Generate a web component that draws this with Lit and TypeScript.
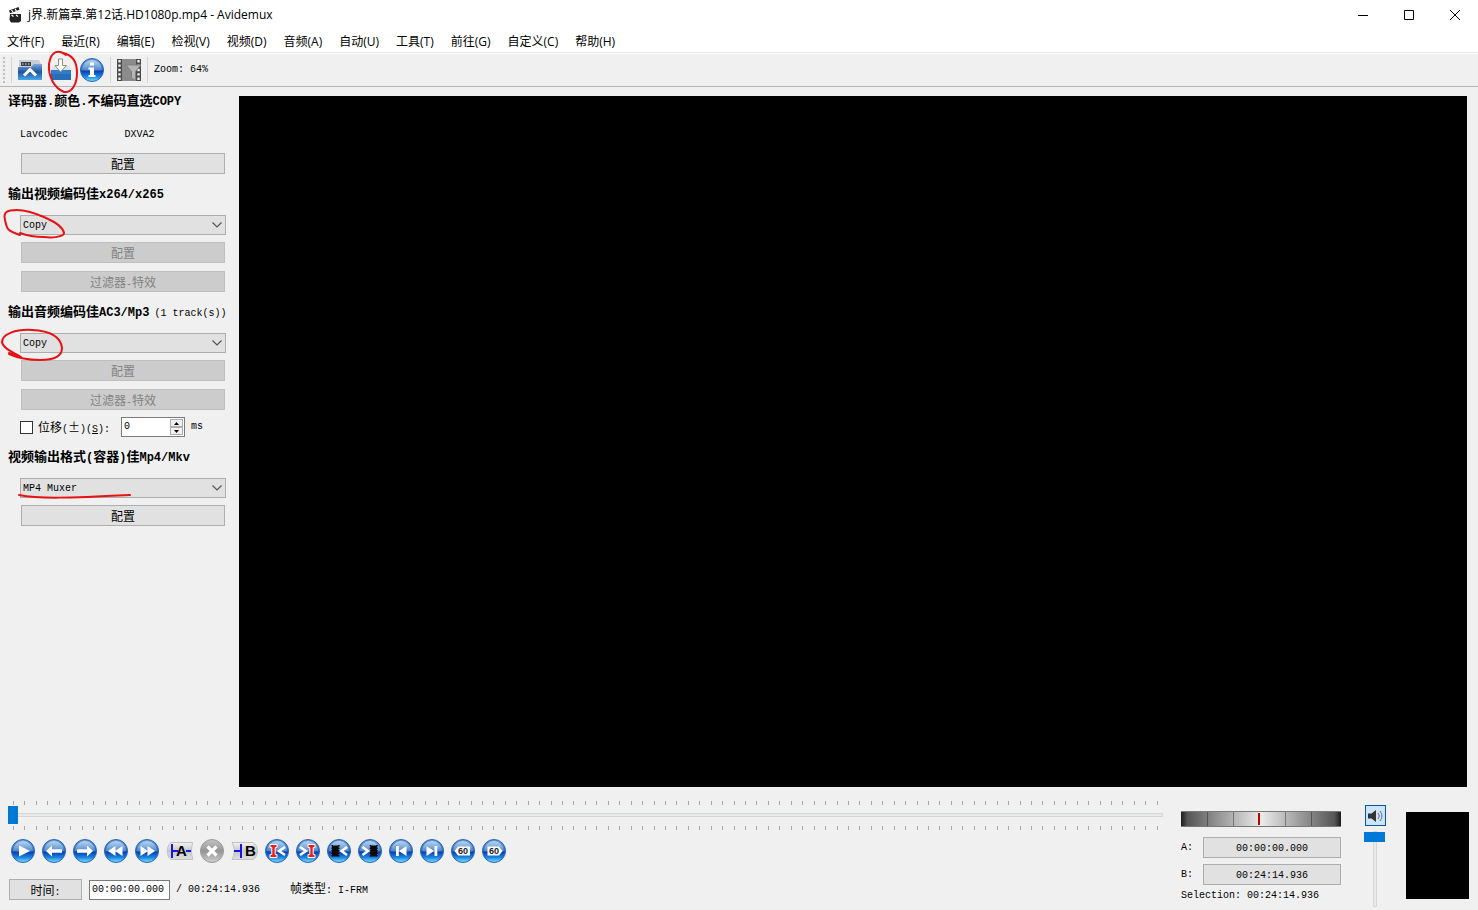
import { LitElement, html, svg, css } from "lit";
import { customElement } from "lit/decorators.js";

const CJK = /([\u4e00-\u9fff±]+)/;

// Ideographs are set one size larger than the Latin letters beside them.
const mix = (text: string) =>
  text.split(CJK).map((part) => (CJK.test(part) ? html`<span class="han">${part}</span>` : part));

const MENUS = ["文件(F)", "最近(R)", "编辑(E)", "检视(V)", "视频(D)", "音频(A)", "自动(U)", "工具(T)", "前往(G)", "自定义(C)", "帮助(H)"];

const orb = (glyph: unknown) => svg`
  <circle cx="12" cy="12" r="11.5" fill="url(#orb)" stroke="#2f62b4" stroke-width="1"/>
  <path d="M2 12a10 10 0 0 1 20 0c-5 1.500-15 1.500-20 0z" fill="url(#gloss)"/>
  ${glyph}`;

const w = "#fff";
const CONTROLS: { label: string; wide?: boolean; art: unknown }[] = [
  { label: "Play", art: orb(svg`<path d="M8 6.500l11 5.500L8 17.500z" fill="${w}"/>`) },
  { label: "Previous frame", art: orb(svg`<path d="M4 12l6-5.500v3.800h10v3.400H10v3.800z" fill="${w}"/>`) },
  { label: "Next frame", art: orb(svg`<path d="M20 12l-6-5.500v3.800H4v3.400h10v3.800z" fill="${w}"/>`) },
  { label: "Previous intra frame", art: orb(svg`<path d="M4 12l7.500-5v10zM11 12l7.500-5v10z" fill="${w}"/>`) },
  { label: "Next intra frame", art: orb(svg`<path d="M20 12l-7.500-5v10zM13 12L5.500 7v10z" fill="${w}"/>`) },
  {
    label: "Set start marker", wide: true,
    art: svg`<path d="M5 3.500h22c-2 6-2 11 0 17H5c-5-3-5-14 0-17z" fill="url(#silver)" stroke="#c2c2c2"/>
      <path d="M6 5v14M6 12h6M20 12h5" stroke="#1616e8" stroke-width="2"/>
      <text x="10" y="17" class="mark">A</text>`,
  },
  {
    label: "Reset markers",
    art: svg`<circle cx="12" cy="12" r="11.500" fill="url(#grey)" stroke="#9a9a9a"/>
      <path d="M7.500 7.500l9 9M16.500 7.500l-9 9" stroke="#fff" stroke-width="3.200"/>`,
  },
  {
    label: "Set end marker", wide: true,
    art: svg`<path d="M1 3.500h21c6 3 6 14 0 17H1c3-6 3-11 0-17z" fill="url(#silver)" stroke="#c2c2c2"/>
      <path d="M10 5v14M3 12h6" stroke="#1616e8" stroke-width="2"/>
      <text x="14" y="17" class="mark">B</text>`,
  },
  { label: "Search previous cut point", art: orb(svg`<path d="M5 5.500h7v3h-1.800v7H12v3H5v-3h1.800v-7H5z" fill="#f31b1b" stroke="#fff" stroke-width="1"/><path d="M20 8l-6 4 6 4" fill="none" stroke="#fff" stroke-width="2.600"/>`) },
  { label: "Search next cut point", art: orb(svg`<path d="M12 5.500h7v3h-1.800v7H19v3h-7v-3h1.800v-7H12z" fill="#f31b1b" stroke="#fff" stroke-width="1"/><path d="M4 8l6 4-6 4" fill="none" stroke="#fff" stroke-width="2.600"/>`) },
  { label: "Previous black frame", art: orb(svg`<path d="M5 6.500h6.500v11H5z" fill="#0a0a0a"/><path d="M5.200 6v12M11.800 6v12" stroke="#0a0a0a" stroke-width="1.500" stroke-dasharray="1.500 1"/><path d="M20 8l-5.500 4 5.500 4" fill="none" stroke="#fff" stroke-width="2.600"/>`) },
  { label: "Next black frame", art: orb(svg`<path d="M12.500 6.500H19v11h-6.500z" fill="#0a0a0a"/><path d="M12.500 6v12M19 6v12" stroke="#0a0a0a" stroke-width="1.500" stroke-dasharray="1.500 1"/><path d="M4.500 8l5.500 4-5.500 4" fill="none" stroke="#fff" stroke-width="2.600"/>`) },
  { label: "First frame", art: orb(svg`<path d="M7 7h2.800v10H7zM17.500 7v10L10 12z" fill="${w}"/>`) },
  { label: "Last frame", art: orb(svg`<path d="M14.500 7h2.800v10h-2.800zM6.500 7v10l7.500-5z" fill="${w}"/>`) },
  { label: "Back one minute", art: orb(svg`<path d="M3.500 12L7 7.500h12v9H7z" fill="${w}"/><text x="7" y="15" class="sixty">60</text>`) },
  { label: "Forward one minute", art: orb(svg`<path d="M20.500 12L17 7.500H5.500v9H17z" fill="${w}"/><text x="7" y="15" class="sixty">60</text>`) },
];

@customElement("app-root")
export class AppRoot extends LitElement {
  static styles = css`
    :host {
      --face: #f0f0f0;
      --edge: #adadad;
      --blue: #0078d7;
      position: relative;
      display: flex;
      flex-direction: column;
      min-height: 100vh;
      background: var(--face);
      color: #000;
      font: 10px/20px "Liberation Mono", "Noto Sans CJK SC", monospace;
    }
    * { box-sizing: border-box; }
    .han { font: 12px/20px "Noto Sans CJK SC", sans-serif; }
    svg { display: block; }
    button, select, input { font: inherit; color: inherit; margin: 0; padding: 0; border-radius: 0; }
    .defs { position: absolute; width: 0; height: 0; }

    .title, .menu { background: #fff; font: 12px/20px "Open Sans", "Noto Sans CJK SC", sans-serif; }
    .title { display: flex; align-items: center; height: 30px; padding-left: 8px; gap: 6px; }
    .title h1 { margin: 0; flex: 1; font: inherit; }
    .window { display: flex; }
    .window button { width: 46px; height: 30px; border: 0; background: none; display: grid; place-items: center; }
    .menu { display: flex; height: 23px; padding: 2px 7px 0; gap: 17px; border-bottom: 1px solid #e6e6e6; }
    .menu a { color: inherit; text-decoration: none; white-space: nowrap; }

    .tools { display: flex; align-items: center; height: 34px; border-top: 1px solid #fff; border-bottom: 1px solid #b4b4b4; padding-left: 3px; line-height: 22px; }
    .grip { width: 2px; height: 26px; border-left: 2px dotted #bdbdbd; }
    .rule { width: 1px; height: 26px; background: #d4d4d4; margin: 0 6px; }
    .tool { width: 24px; height: 24px; border: 0; background: none; }
    .pack { display: flex; gap: 7px; }

    .main { flex: 1; display: flex; }
    .side { flex: none; width: 239px; padding: 4px 13px 0 8px; }
    .side h2 { margin: 0; height: 20px; font: bold 12px/20px "Liberation Mono", monospace; white-space: nowrap; }
    .side h2 .han { font: bold 13px/18px "Noto Sans CJK SC", sans-serif; }
    .side h2 small { font: 10px/18px "Liberation Mono", monospace; margin-left: 5px; }
    .group { display: flex; flex-direction: column; padding: 11px 0 10px 12px; gap: 7px; }
    .codec { display: flex; height: 20px; margin: 3px 0 1px; }
    .codec span { flex: 1; }
    .codec span + span { padding-left: 3px; }
    .push { display: block; height: 21px; border: 1px solid var(--edge); background: #e1e1e1; line-height: 19px; text-align: center; }
    .group .push { margin: 0 1px; }
    .group .push + .push { margin-top: 1px; }
    .push:disabled { background: #ccc; border-color: #bfbfbf; color: #838383; }
    .combo { display: grid; height: 20px; align-items: center; }
    .combo select, .combo svg { grid-area: 1 / 1; }
    .combo select { appearance: none; width: 100%; height: 20px; border: 1px solid var(--edge); background: #e1e1e1; padding-left: 2px; }
    .combo svg { justify-self: end; margin-right: 4px; pointer-events: none; }
    .shift { display: flex; align-items: center; height: 20px; }
    .shift input[type="checkbox"] { flex: none; appearance: none; width: 13px; height: 13px; border: 1px solid #333; background: #fff; margin-right: 5px; }
    .shift .name { flex: none; width: 83px; height: 20px; white-space: nowrap; }
    .spin { flex: none; display: flex; width: 64px; height: 20px; border: 1px solid #7a7a7a; background: #fff; margin-right: 6px; }
    .spin input { width: 100%; min-width: 0; border: 0; padding-left: 2px; background: none; }
    .steps { flex: none; width: 15px; display: grid; padding: 1px; }
    .steps button { border: 1px solid var(--edge); background: #f0f0f0; display: grid; place-items: center; }
    .video { flex: 1; min-width: 0; margin: 9px 11px 0 0; background: #000; }

    .deck { display: flex; height: 123px; }
    .transport { flex: 1; min-width: 0; padding: 14px 18px 0 8px; }
    .ticks { display: flex; justify-content: space-between; height: 4px; margin: 0 5px; }
    .ticks i { width: 1px; background: #a8a8a8; }
    input[type="range"] { appearance: none; background: none; display: block; outline: none; }
    .seek { width: 100%; height: 18px; margin: 1px 0 2px; }
    .seek::-webkit-slider-runnable-track { height: 4px; border: 1px solid #d6d6d6; border-left: 0; background: #e7eaea; }
    .seek::-webkit-slider-thumb { appearance: none; width: 10px; height: 18px; margin-top: -8px; background: var(--blue); border: 0; border-radius: 0; }
    .orbs { display: flex; gap: 7px; padding: 9px 3px 0; }
    .orbs button { flex: none; width: 24px; height: 24px; border: 0; background: none; }
    .orbs .wide { width: 27px; }
    .mark { font: bold 15px "Liberation Sans", sans-serif; }
    .sixty { font: bold 9px "Liberation Sans", sans-serif; fill: #222; }
    .status { display: flex; align-items: center; padding: 15px 1px 0; }
    .status .push { width: 73px; margin-right: 7px; }
    .time { width: 81px; height: 20px; border: 1px solid #7a7a7a; background: #fff; padding-left: 2px; margin-right: 6px; }
    .total { margin-right: 30px; }

    .marks { flex: none; width: 160px; margin: 24px 23px 0 0; line-height: 22px; }
    .jog { width: 160px; height: 16px; }
    .marker { display: flex; margin-top: 6px; height: 21px; }
    .jog + .marker { margin-top: 10px; }
    .marker label { width: 22px; }
    .marker .push { flex: 1; line-height: 21px; }
    .volume { flex: none; width: 22px; margin: 18px 20px 0 0; display: flex; flex-direction: column; align-items: center; }
    .speaker { width: 21px; height: 21px; border: 1px solid #0a5597; background: #cce4f7; display: grid; place-items: center; }
    .level { writing-mode: vertical-lr; direction: rtl; width: 22px; height: 76px; margin-top: 5px; }
    .level::-webkit-slider-runnable-track { width: 4px; border: 1px solid #d6d6d6; background: #e7eaea; }
    .level::-webkit-slider-thumb { appearance: none; width: 21px; height: 10px; margin-left: -10px; background: var(--blue); border: 0; border-radius: 0; }
    .meter { flex: none; width: 63px; height: 87px; margin: 25px 9px 0 0; background: #000; }
    .ink { position: absolute; left: 0; top: 0; pointer-events: none; fill: none; stroke: #e81216; stroke-width: 2; stroke-linecap: round; }
  `;

  private combo(label: string, value: string) {
    return html`<div class="combo">
      <select aria-label=${label}><option>${value}</option></select>
      <svg width="10" height="6" viewBox="0 0 10 6"><path d="M.5 .5L5 5 9.500 .5" fill="none" stroke="#555" stroke-width="1.200"/></svg>
    </div>`;
  }

  private push(text: string, disabled = false) {
    return html`<button class="push" ?disabled=${disabled}>${mix(text)}</button>`;
  }

  private ticks() {
    return html`<div class="ticks">${Array.from({ length: 101 }, () => html`<i></i>`)}</div>`;
  }

  render() {
    return html`
      <svg class="defs" aria-hidden="true"><defs>
        <linearGradient id="orb" x2="0" y2="1"><stop offset="0" stop-color="#6aa3da"/><stop offset=".48" stop-color="#2c72c2"/><stop offset=".55" stop-color="#0a3fb0"/><stop offset=".78" stop-color="#1b86e2"/><stop offset="1" stop-color="#7fe6ff"/></linearGradient>
        <linearGradient id="gloss" x2="0" y2="1"><stop offset="0" stop-color="#fff" stop-opacity=".55"/><stop offset="1" stop-color="#fff" stop-opacity=".12"/></linearGradient>
        <linearGradient id="grey" x2="0" y2="1"><stop offset="0" stop-color="#c4c4c4"/><stop offset=".5" stop-color="#959595"/><stop offset="1" stop-color="#cfcfcf"/></linearGradient>
        <linearGradient id="silver" x2="0" y2="1"><stop offset="0" stop-color="#f2f2f2"/><stop offset=".5" stop-color="#c9c9c9"/><stop offset="1" stop-color="#dedede"/></linearGradient>
        <linearGradient id="folder" x2="0" y2="1"><stop offset="0" stop-color="#7aa6dc"/><stop offset=".5" stop-color="#1f559f"/><stop offset="1" stop-color="#4aa8ee"/></linearGradient>
        <linearGradient id="dial"><stop offset="0" stop-color="#1c1c1c"/><stop offset=".04" stop-color="#555"/><stop offset=".5" stop-color="#ececec"/><stop offset=".96" stop-color="#555"/><stop offset="1" stop-color="#1c1c1c"/></linearGradient>
      </defs></svg>

      <header class="title">
        <svg width="14" height="16" viewBox="0 0 14 16"><path d="M1 3.500L10.500 0l1 2.800L2 6.200zM2 7h11v7l-2 1.500H3L1.500 13z" fill="#222"/><path d="M3.500 3l1.500 2M7 1.800l1.500 2M3.500 8l2 1.500M8 8l2 1.500" stroke="#fff" stroke-width="1.200"/></svg>
        <h1>j界.新篇章.第12话.HD1080p.mp4 - Avidemux</h1>
        <div class="window">
          <button aria-label="Minimize"><svg width="10" height="10"><path d="M0 5.500h10" stroke="#000"/></svg></button>
          <button aria-label="Maximize"><svg width="10" height="10"><path d="M.5 .5h9v9h-9z" fill="none" stroke="#000"/></svg></button>
          <button aria-label="Close"><svg width="10" height="10"><path d="M0 0l10 10M10 0L0 10" stroke="#000"/></svg></button>
        </div>
      </header>
      <nav class="menu">${MENUS.map((m) => html`<a href="#">${m}</a>`)}</nav>

      <div class="tools">
        <div class="grip"></div><div class="rule"></div>
        <div class="pack">
          <button class="tool" aria-label="Open video"><svg width="24" height="24" viewBox="0 0 24 24"><path d="M1 2h20l2 4v14H1z" fill="#c9ced6"/><path d="M3 4h10v4H3z" fill="#3b3f46"/><path d="M4 6h8" stroke="#ddd" stroke-dasharray="1.500 1.500"/><path d="M0 9h13l3-3h8v16H0z" fill="url(#folder)"/><path d="M6 17.500l6-6 6 6" fill="none" stroke="#fff" stroke-width="3"/></svg></button>
          <button class="tool" aria-label="Save video"><svg width="24" height="24" viewBox="0 0 24 24"><path d="M4 8h16l2 4H2z" fill="#dfe3e8"/><path d="M2 12h20v10H2z" fill="#2f7cc9"/><path d="M2 16h20v6H2z" fill="#276db8"/><path d="M9.500 1h4v6.500h4L11.500 14 6 7.500h3.500z" fill="#fbfbf6" stroke="#8d8d80"/></svg></button>
          <button class="tool" aria-label="Information"><svg width="24" height="24" viewBox="0 0 24 24">${orb(svg`<path d="M10 4.500h4v3h-4zM8.500 9.500H14V17h1.500v2h-7v-2H10v-5.500H8.500z" fill="#fff"/>`)}</svg></button>
        </div>
        <div class="rule"></div>
        <button class="tool" aria-label="Filters"><svg width="24" height="24" viewBox="0 0 24 24"><path d="M0 1h24v22H0z" fill="#4a4a4a"/><path d="M5 1h14v22H5z" fill="#8b8b8b"/><path d="M2.500 2v21M21.500 2v21" stroke="#eee" stroke-width="2.400" stroke-dasharray="2.400 2"/><path d="M9 7h15l-5.500 6.500v9l-4-2.500v-6.500z" fill="#b4b4b4" stroke="#808080"/></svg></button>
        <div class="rule"></div>
        <span>Zoom: 64%</span>
      </div>

      <main class="main">
        <section class="side">
          <h2>${mix("译码器.颜色.不编码直选COPY")}</h2>
          <div class="group">
            <div class="codec"><span>Lavcodec</span><span>DXVA2</span></div>
            ${this.push("配置")}
          </div>
          <h2>${mix("输出视频编码佳x264/x265")}</h2>
          <div class="group">
            ${this.combo("Video output", "Copy")} ${this.push("配置", true)} ${this.push("过滤器-特效", true)}
          </div>
          <h2>${mix("输出音频编码佳AC3/Mp3")}<small>(1 track(s))</small></h2>
          <div class="group">
            ${this.combo("Audio output", "Copy")} ${this.push("配置", true)} ${this.push("过滤器-特效", true)}
            <div class="shift">
              <input type="checkbox" id="shift" /><label class="name" for="shift">${mix("位移(±)(")}<u>S</u>):</label>
              <div class="spin">
                <input id="delay" aria-label="Shift in milliseconds" value="0" />
                <div class="steps">
                  <button aria-label="Increase"><svg width="5" height="3"><path d="M0 3L2.500 0 5 3z"/></svg></button>
                  <button aria-label="Decrease"><svg width="5" height="3"><path d="M0 0l2.500 3L5 0z"/></svg></button>
                </div>
              </div>
              <label for="delay">ms</label>
            </div>
          </div>
          <h2>${mix("视频输出格式(容器)佳Mp4/Mkv")}</h2>
          <div class="group">${this.combo("Output format", "MP4 Muxer")} ${this.push("配置")}</div>
        </section>
        <div class="video"></div>
      </main>

      <footer class="deck">
        <div class="transport">
          ${this.ticks()}
          <input class="seek" type="range" min="0" max="100" value="0" aria-label="Position" />
          ${this.ticks()}
          <div class="orbs">
            ${CONTROLS.map((c) => html`<button class=${c.wide ? "wide" : ""} aria-label=${c.label}>
              <svg width=${c.wide ? 27 : 24} height="24">${c.art}</svg></button>`)}
          </div>
          <div class="status">
            ${this.push("时间:")}
            <input class="time" aria-label="Current time" value="00:00:00.000" />
            <span class="total">/ 00:24:14.936</span>
            <span>${mix("帧类型: I-FRM")}</span>
          </div>
        </div>
        <div class="marks">
          <svg class="jog" viewBox="0 0 160 16"><path d="M0 0h160v16H0z" fill="url(#dial)"/><path d="M0 .5h160M0 15.500h160" stroke="#777"/><path d="M26.500 1v14M52.500 1v14M104.500 1v14M130.500 1v14" stroke="#000" stroke-opacity=".35"/><path d="M78 2v12" stroke="#c80000" stroke-width="2"/></svg>
          <div class="marker"><label for="a">A:</label><button class="push" id="a">00:00:00.000</button></div>
          <div class="marker"><label for="b">B:</label><button class="push" id="b">00:24:14.936</button></div>
          <div>Selection: 00:24:14.936</div>
        </div>
        <div class="volume">
          <button class="speaker" aria-label="Mute"><svg width="16" height="14" viewBox="0 0 16 14"><path d="M1 4.500h3.500L9 1v12L4.500 9.500H1z" fill="#333"/><path d="M11 4c1.500 2 1.500 4 0 6M13 2c2.500 3 2.500 7 0 10" fill="none" stroke="#667"/></svg></button>
          <input class="level" type="range" min="0" max="100" value="100" aria-label="Volume" />
        </div>
        <div class="meter"></div>
      </footer>

      <svg class="ink" width="240" height="510" aria-hidden="true">
        <path d="M66 55C58 49 51 51 49 64c-1 12 5 24 15 28 8 1 13-8 13-19 0-10-4-18-14-20"/>
        <path d="M20 235C8 231 7 230 5 220c-2-8 2-10 12-10 12 0 22 5 29 8 9 4 17 9 18 15 0 4-12 5-20 4-8 0-16-1-24-4"/>
        <path d="M9 353c4 2 8 3 12 4M21 357C12 352 3 348 2 342c0-8 14-13 30-12 20 1 29 8 30 18 0 8-8 12-22 12-12 0-22-2-31-6"/>
        <path d="M19 495c20 4 50 3 111 0"/>
      </svg>
    `;
  }
}
